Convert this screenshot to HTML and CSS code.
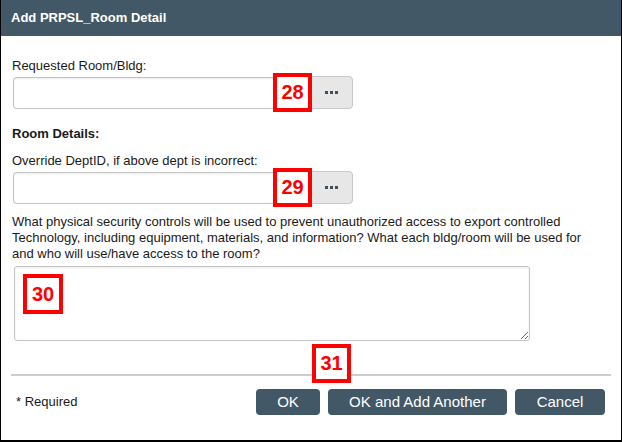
FILE: index.html
```html
<!DOCTYPE html>
<html>
<head>
<meta charset="utf-8">
<link rel="stylesheet" href="styles.css">
</head>
<body>
<div class="dialog">
  <div class="header">Add PRPSL_Room Detail</div>
  <div class="content">
    <div class="label">Requested Room/Bldg:</div>
    <div class="field field-first">
      <input class="text-input" type="text">
      <button class="lookup" type="button"><span class="dot"></span><span class="dot"></span><span class="dot"></span></button>
    </div>
    <div class="section-title">Room Details:</div>
    <div class="label label-second">Override DeptID, if above dept is incorrect:</div>
    <div class="field">
      <input class="text-input" type="text">
      <button class="lookup" type="button"><span class="dot"></span><span class="dot"></span><span class="dot"></span></button>
    </div>
    <p class="question">What physical security controls will be used to prevent unauthorized access to export controlled Technology, including equipment, materials, and information? What each bldg/room will be used for and who will use/have access to the room?</p>
    <textarea class="answer"></textarea>
  </div>
  <div class="rule"></div>
  <div class="footer">
    <span class="required">* Required</span>
    <div class="actions">
      <button class="btn btn-ok" type="button">OK</button>
      <button class="btn btn-another" type="button">OK and Add Another</button>
      <button class="btn btn-cancel" type="button">Cancel</button>
    </div>
  </div>
  <div class="callout c28">28</div>
  <div class="callout c29">29</div>
  <div class="callout c30">30</div>
  <div class="callout c31">31</div>
</div>
</body>
</html>
```

FILE: styles.css
```css
html, body {
  margin: 0;
  padding: 0;
  background: #fff;
}

body {
  font-family: "Liberation Sans", Arial, sans-serif;
  font-size: 13px;
  color: #1a1a1a;
}

.dialog {
  position: relative;
  width: 622px;
  height: 442px;
  box-sizing: border-box;
  border-left: 1px solid #000;
  border-right: 1px solid #000;
  border-bottom: 2px solid #000;
  background: #fff;
}

.header {
  height: 36px;
  line-height: 36px;
  background: #435867;
  color: #fff;
  font-weight: bold;
  font-size: 13px;
  padding-left: 10px;
}

.content {
  padding: 22px 0 0 11px;
}

.label {
  line-height: 16px;
}

.label-second {
  margin-top: 11px;
}

.section-title {
  margin-top: 17px;
  line-height: 16px;
  font-weight: bold;
}

.field {
  display: flex;
  margin: 3px 0 0 1px;
  height: 32px;
}

.text-input {
  box-sizing: border-box;
  width: 297px;
  height: 32px;
  margin: 0;
  border: 1px solid #c4c4c4;
  border-right: none;
  border-radius: 4px 0 0 4px;
  box-shadow: inset 0 1px 2px rgba(0, 0, 0, 0.08);
  background: #fff;
  padding: 0 6px;
  font: 13px "Liberation Sans", Arial, sans-serif;
}

.lookup {
  box-sizing: border-box;
  width: 43px;
  height: 33px;
  margin: -1px 0 0 0;
  padding: 0;
  border: 1px solid #c8c8c8;
  border-radius: 0 4px 4px 0;
  background: #e7e7e7;
  display: flex;
  align-items: center;
  justify-content: center;
  gap: 1.5px;
}

.dot {
  width: 3.5px;
  height: 3.5px;
  background: #3f4f5b;
}

.question {
  margin: 10px 0 0 0;
  max-width: 590px;
  line-height: 16px;
}

.answer {
  display: block;
  box-sizing: border-box;
  width: 516px;
  height: 75px;
  margin: 4px 0 0 2px;
  border: 1px solid #c4c4c4;
  border-radius: 3px;
  box-shadow: inset 0 1px 2px rgba(0, 0, 0, 0.08);
  padding: 2px;
  font: 13px "Liberation Sans", Arial, sans-serif;
}

.rule {
  margin: 33px 10px 0 10px;
  height: 2px;
  background: #cccccc;
}

.footer {
  display: flex;
  justify-content: space-between;
  align-items: center;
  padding: 13px 16px 0 15px;
}

.required {
  line-height: 16px;
}

.actions {
  display: flex;
  gap: 8px;
}

.btn {
  height: 26px;
  padding: 0;
  margin: 0;
  border: none;
  border-radius: 4px;
  background: #435867;
  color: #fff;
  font: 15px "Liberation Sans", Arial, sans-serif;
  line-height: 26px;
  text-align: center;
}

.btn-ok { width: 64px; }
.btn-another { width: 179px; }
.btn-cancel { width: 90px; }

.callout {
  position: absolute;
  box-sizing: border-box;
  border: 4px solid #ff0000;
  background: #fff;
  color: #ff0000;
  font: bold 20px "Liberation Sans", Arial, sans-serif;
  display: flex;
  align-items: center;
  justify-content: center;
}

.c28 { left: 272px; top: 73px; width: 39px; height: 39px; }
.c29 { left: 272px; top: 168px; width: 39px; height: 39px; }
.c30 { left: 22px; top: 274px; width: 40px; height: 40px; }
.c31 { left: 311px; top: 344px; width: 39px; height: 39px; }
```
